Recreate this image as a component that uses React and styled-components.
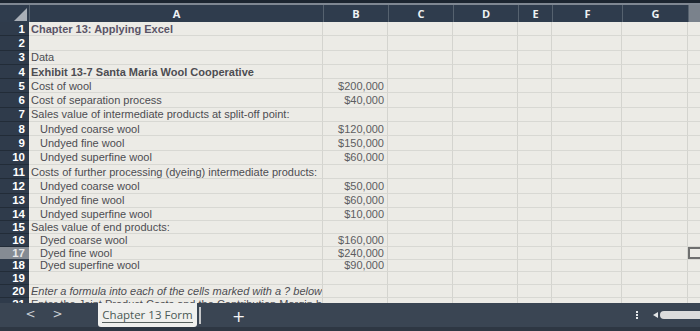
import styled, { createGlobalStyle } from "styled-components";

const GlobalStyle = createGlobalStyle`
  html, body {
    margin: 0;
    padding: 0;
    background: #2b3644;
    overflow: hidden;
  }
`;

// column widths: row header, A..G, then H which runs past the window edge
const COLS = "29px 294px 65px 65px 65px 34px 70px 66px 80px";
const LETTERS = ["A", "B", "C", "D", "E", "F", "G", "H"];

const rows = [
  { n: 1, a: "Chapter 13: Applying Excel", kind: "title" },
  { n: 2 },
  { n: 3, a: "Data" },
  { n: 4, a: "Exhibit 13-7 Santa Maria Wool Cooperative", kind: "bold" },
  { n: 5, a: "Cost of wool", b: "$200,000" },
  { n: 6, a: "Cost of separation process", b: "$40,000" },
  { n: 7, a: "Sales value of intermediate products at split-off point:" },
  { n: 8, a: "Undyed coarse wool", indent: true, b: "$120,000" },
  { n: 9, a: "Undyed fine wool", indent: true, b: "$150,000" },
  { n: 10, a: "Undyed superfine wool", indent: true, b: "$60,000" },
  { n: 11, a: "Costs of further processing (dyeing) intermediate products:" },
  { n: 12, a: "Undyed coarse wool", indent: true, b: "$50,000" },
  { n: 13, a: "Undyed fine wool", indent: true, b: "$60,000" },
  { n: 14, a: "Undyed superfine wool", indent: true, b: "$10,000" },
  { n: 15, a: "Sales value of end products:" },
  { n: 16, a: "Dyed coarse wool", indent: true, b: "$160,000" },
  { n: 17, a: "Dyed fine wool", indent: true, b: "$240,000", active: true },
  { n: 18, a: "Dyed superfine wool", indent: true, b: "$90,000" },
  { n: 19 },
  { n: 20, a: "Enter a formula into each of the cells marked with a ? below", kind: "italic" },
  { n: 21, a: "Enter the Joint Product Costs and the Contribution Margin below" },
];

const Page = styled.div`
  width: 700px;
  height: 331px;
  display: flex;
  flex-direction: column;
  font-family: "Liberation Sans", Arial, sans-serif;
  overflow: hidden;
`;

const TopStrip = styled.div`
  height: 3px;
  background: #1c2530;
  border-bottom: 2px solid #7f8792;
`;

const HeaderRow = styled.div`
  display: grid;
  grid-template-columns: ${COLS};
  height: 17px;
  background: #2f3c4d;
`;

const Corner = styled.div`
  display: flex;
  align-items: flex-end;
  justify-content: flex-end;
  padding: 0 2px 1px 0;
`;

const ColHead = styled.div`
  display: flex;
  align-items: center;
  justify-content: center;
  color: #eef1f4;
  font-family: "Open Sans", "Liberation Sans", sans-serif;
  font-weight: 700;
  font-size: 11px;
  border-left: 1px solid #56626f;
  background: ${(p) => (p.$active ? "#7a828c" : "transparent")};
`;

const Body = styled.div`
  flex: 1;
  overflow: hidden;
  background: #ecebe6;
`;

const Row = styled.div`
  display: grid;
  grid-template-columns: ${COLS};
  height: ${(p) => p.$h}px;
`;

const RowHead = styled.div`
  display: flex;
  align-items: center;
  justify-content: flex-end;
  padding-right: 4px;
  font-weight: 700;
  font-size: 11.5px;
  color: ${(p) => (p.$active ? "#e9e9ea" : "#ffffff")};
  background: ${(p) => (p.$active ? "#858b93" : "#2f3b4b")};
  border-bottom: 1px solid #222c38;
`;

const Cell = styled.div`
  display: flex;
  align-items: center;
  justify-content: ${(p) => (p.$right ? "flex-end" : "flex-start")};
  padding: ${(p) => (p.$right ? "0 3px 0 0" : p.$indent ? "0 0 0 11px" : "0 0 0 2px")};
  font-size: 11px;
  white-space: nowrap;
  overflow: hidden;
  color: ${(p) => (p.$title ? "#5a5467" : p.$right ? "#5d5d61" : "#4d4d52")};
  font-weight: ${(p) => (p.$bold ? 700 : 400)};
  font-style: ${(p) => (p.$italic ? "italic" : "normal")};
  border-right: 1px solid #d4d4cf;
  border-bottom: 1px solid #d8d8d3;
  box-shadow: ${(p) => (p.$selected ? "inset 0 0 0 2px #6f6f6f" : "none")};
`;

const TabBar = styled.div`
  height: 28px;
  display: flex;
  align-items: flex-start;
  background: #3a4553;
  border-bottom: 4px solid #2e3743;
  box-sizing: border-box;
`;

const NavArrow = styled.div`
  width: 27px;
  height: 22px;
  display: flex;
  align-items: center;
  justify-content: center;
  color: #c9ced4;
  font-family: "DejaVu Sans", sans-serif;
  font-size: 12px;
  &:first-child {
    margin-left: 17px;
  }
`;

const SheetTab = styled.div`
  margin-left: 27px;
  width: 99px;
  height: 24px;
  background: #f0f0ee;
  border-radius: 0 0 3px 3px;
  display: flex;
  align-items: center;
  justify-content: center;
  font-family: "Open Sans", "Noto Sans", sans-serif;
  font-size: 11.5px;
  color: #4a5955;
`;

const TabLabel = styled.span`
  border-bottom: 1.5px solid #56605e;
  line-height: 14px;
`;

const TabEdge = styled.div`
  width: 2px;
  height: 17px;
  margin: 4px 0 0 2px;
  background: #c6c8ca;
`;

const AddTab = styled.div`
  margin-left: 31px;
  height: 26px;
  display: flex;
  align-items: center;
  color: #f4f5f6;
  font-family: "DejaVu Sans", sans-serif;
  font-size: 16px;
`;

const Spacer = styled.div`
  flex: 1;
`;

const Dots = styled.div`
  height: 24px;
  display: flex;
  flex-direction: column;
  justify-content: center;
  gap: 1px;
  margin-right: 15px;
  span {
    width: 2px;
    height: 2px;
    background: #e6e9ec;
  }
`;

const ScrollWrap = styled.div`
  height: 24px;
  display: flex;
  align-items: center;
  gap: 2px;
`;

const ScrollLeft = styled.div`
  width: 0;
  height: 0;
  border-top: 3.5px solid transparent;
  border-bottom: 3.5px solid transparent;
  border-right: 5px solid #e4e6e8;
`;

const ScrollThumb = styled.div`
  width: 40px;
  height: 8px;
  border-radius: 4px 0 0 4px;
  background: #dcdcdc;
`;

const heightOf = (n) => (n <= 13 ? 14.3 : 12.9);

export default function App() {
  return (
    <Page>
      <GlobalStyle />
      <TopStrip />
      <HeaderRow>
        <Corner>
          <svg width="13" height="13" viewBox="0 0 13 13">
            <polygon points="13,0 13,13 0,13" fill="#a9afb7" />
          </svg>
        </Corner>
        {LETTERS.map((l) => (
          <ColHead key={l} $active={l === "H"}>
            {l}
          </ColHead>
        ))}
      </HeaderRow>
      <Body>
        {rows.map((r) => (
          <Row key={r.n} $h={heightOf(r.n)}>
            <RowHead $active={r.active}>{r.n}</RowHead>
            <Cell
              $indent={r.indent}
              $title={r.kind === "title"}
              $bold={r.kind === "title" || r.kind === "bold"}
              $italic={r.kind === "italic"}
            >
              {r.a}
            </Cell>
            <Cell $right>{r.b}</Cell>
            <Cell />
            <Cell />
            <Cell />
            <Cell />
            <Cell />
            <Cell $selected={r.active} />
          </Row>
        ))}
      </Body>
      <TabBar>
        <NavArrow>&lt;</NavArrow>
        <NavArrow>&gt;</NavArrow>
        <SheetTab>
          <TabLabel>Chapter 13 Form</TabLabel>
        </SheetTab>
        <TabEdge />
        <AddTab>+</AddTab>
        <Spacer />
        <Dots>
          <span />
          <span />
          <span />
        </Dots>
        <ScrollWrap>
          <ScrollLeft />
          <ScrollThumb />
        </ScrollWrap>
      </TabBar>
    </Page>
  );
}
